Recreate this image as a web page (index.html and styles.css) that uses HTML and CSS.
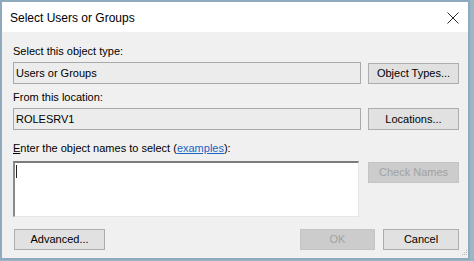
FILE: index.html
```html
<!DOCTYPE html>
<html>
<head>
<meta charset="utf-8">
<link rel="stylesheet" href="styles.css">
</head>
<body>
<div class="window">
  <div class="titlebar">
    <span class="title">Select Users or Groups</span>
    <svg class="close" width="12" height="12" viewBox="0 0 12 12"><path d="M0.5 0.5 L11.5 11.5 M11.5 0.5 L0.5 11.5" stroke="#2b2b2b" stroke-width="1" fill="none"/></svg>
  </div>
  <div class="content">
    <div class="label l1">Select this object type:</div>
    <div class="row">
      <div class="field">Users or Groups</div>
      <button class="btn">Object Types...</button>
    </div>
    <div class="label l2">From this location:</div>
    <div class="row r2">
      <div class="field">ROLESRV1</div>
      <button class="btn">Locations...</button>
    </div>
    <div class="label l3"><u>E</u>nter the object names to select (<a class="link">examples</a>):</div>
    <div class="row r3">
      <div class="textarea"><span class="caret"></span></div>
      <button class="btn disabled">Check Names</button>
    </div>
    <div class="bottom">
      <button class="btn adv">Advanced...</button>
      <div class="spacer"></div>
      <button class="btn ok disabled">OK</button>
      <button class="btn cancel">Cancel</button>
    </div>
  </div>
  <svg class="grip" width="7" height="7" viewBox="0 0 7 7"><g fill="#b8b8b8"><rect x="5" y="0" width="1" height="1"/><rect x="3" y="2" width="1" height="1"/><rect x="5" y="2" width="1" height="1"/><rect x="1" y="4" width="1" height="1"/><rect x="3" y="4" width="1" height="1"/><rect x="5" y="4" width="1" height="1"/></g></svg>
</div>
</body>
</html>
```
FILE: styles.css
```css
html, body { margin: 0; padding: 0; }
body {
  width: 474px; height: 261px;
  background: #9db6c6;
  font-family: "Liberation Sans", Arial, sans-serif;
  font-size: 11px;
  color: #000;
  overflow: hidden;
}
.window {
  position: relative;
  width: 470px; height: 260px;
  box-sizing: border-box;
  border: 2px solid #8eaabc;
  background: #f0f0f0;
}
.titlebar {
  height: 30px;
  background: #fff;
  display: flex;
  align-items: center;
  justify-content: space-between;
  padding: 0 8px 0 8px;
}
.title { font-size: 12px; color: #000; position: relative; top: 1px; }
.close { display: block; margin-right: 1px; position: relative; top: 1px; }
.content {
  padding: 12px 9px 0 11px;
}
.label { line-height: 15px; height: 15px; }
.row { display: flex; align-items: flex-start; margin-top: 3px; gap: 7px; }
.field {
  width: 348px; height: 22px; box-sizing: border-box;
  border: 1px solid #a9a9a9;
  background: #ececec;
  padding: 0 0 0 2px;
  line-height: 20px;
  color: #000;
}
.btn {
  font-family: inherit; font-size: 11px; color: #000;
  width: 91px; height: 21px; box-sizing: border-box;
  border: 1px solid #adadad;
  background: #e1e1e1;
  padding: 0; margin: 1px 0 0 0;
  line-height: 19px;
}
.btn.disabled { background: #cccccc; border-color: #c4c4c4; color: #a2a2a2; }
.l2 { margin-top: 6px; }
.r2 { margin-top: 3px; }
.r2 .btn { margin-top: 0; height: 22px; }
.l3 { margin-top: 11px; }
.l3 u { text-decoration: underline; }
.link { color: #1a66c4; text-decoration: underline; }
.r3 { margin-top: 5px; }
.textarea {
  width: 346px; height: 56px; box-sizing: border-box;
  background: #fff;
  border-top: 2px solid #7c7c7c;
  border-left: 2px solid #8a8a8a;
  border-right: 1px solid #e6e6e6;
  border-bottom: 1px solid #e6e6e6;
  padding: 2px 0 0 1px;
}
.caret { display: block; width: 1px; height: 13px; background: #222; }
.r3 .btn { margin-left: 2px; }
.bottom { display: flex; margin-top: 11px; padding-left: 1px; }
.adv { width: 91px; }
.spacer { flex: 1; }
.ok { width: 75px; margin-right: 8px; }
.cancel { width: 76px; }
.grip { position: absolute; right: 0; bottom: 1px; }
```
